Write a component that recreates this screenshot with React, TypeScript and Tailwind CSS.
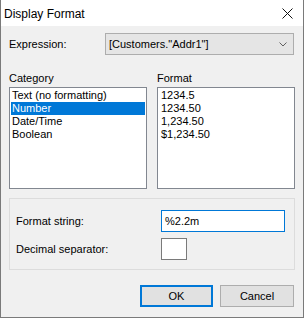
import React from "react";

const font = { fontFamily: '"Liberation Sans", Arial, sans-serif' };

export default function App() {
  const cats = ["Text (no formatting)", "Number", "Date/Time", "Boolean"];
  const fmts = ["1234.5", "1234.50", "1,234.50", "$1,234.50"];
  return (
    <div
      style={font}
      className="w-[304px] h-[318px] box-border border-x border-b border-[#7a7a7a] bg-[#f0f0f0] flex flex-col text-[11px] leading-[13px] text-black overflow-hidden"
    >
      <div className="h-[26px] bg-white flex items-center justify-between pl-[3px] pr-[10px] shrink-0">
        <span className="text-[12px] leading-[14px] mt-[1px]">Display Format</span>
        <svg width="11" height="11" viewBox="0 0 11 11" className="mt-[1px]">
          <path d="M0.5 0.5 L10.5 10.5 M10.5 0.5 L0.5 10.5" stroke="#111" strokeWidth="1" fill="none" />
        </svg>
      </div>
      <div className="flex flex-col pl-[8px] pr-[8px]">
        <div className="flex items-center mt-[7px] h-[22px]">
          <span className="w-[96px]">Expression:</span>
          <div className="w-[189px] h-[22px] box-border border border-[#adadad] bg-[#e5e5e5] flex items-center justify-between pl-[3px] pr-[6px]">
            <span>[Customers."Addr1"]</span>
            <svg width="8" height="5" viewBox="0 0 8 5">
              <path d="M0.5 0.5 L4 4 L7.5 0.5" stroke="#606060" strokeWidth="1" fill="none" />
            </svg>
          </div>
        </div>
        <div className="flex gap-[10px] mt-[17px]">
          <div className="flex flex-col">
            <span className="h-[15px]">Category</span>
            <div className="w-[138px] h-[102px] box-border border border-[#828790] bg-white p-[1px]">
              {cats.map((c, i) => (
                <div
                  key={c}
                  className={
                    i === 1
                      ? "h-[13px] pl-[1px] bg-[#0078d7] text-white"
                      : "h-[13px] pl-[1px]"
                  }
                >
                  {c}
                </div>
              ))}
            </div>
          </div>
          <div className="flex flex-col">
            <span className="h-[15px]">Format</span>
            <div className="w-[138px] h-[102px] box-border border border-[#828790] bg-white pt-[1px] pl-[3px]">
              {fmts.map((f) => (
                <div key={f} className="h-[13px]">
                  {f}
                </div>
              ))}
            </div>
          </div>
        </div>
        <div className="mt-[9px] w-[286px] h-[72px] box-border border border-[#dcdcdc] flex flex-col pl-[6px] pt-[11px] gap-[6px]">
          <div className="flex items-center h-[22px]">
            <span className="w-[145px]">Format string:</span>
            <div className="w-[124px] h-[22px] box-border border border-[#0078d7] bg-white flex items-center pl-[3px]">
              %2.2m
            </div>
          </div>
          <div className="flex items-center h-[22px]">
            <span className="w-[145px]">Decimal separator:</span>
            <div className="w-[26px] h-[22px] box-border border border-[#7a7a7a] bg-white" />
          </div>
        </div>
        <div className="flex justify-end gap-[7px] mt-[15px] pr-[1px]">
          <div className="w-[73px] h-[22px] box-border border-2 border-[#0078d7] bg-[#e1e1e1] flex items-center justify-center">
            OK
          </div>
          <div className="w-[74px] h-[22px] box-border border border-[#adadad] bg-[#e1e1e1] flex items-center justify-center">
            Cancel
          </div>
        </div>
      </div>
    </div>
  );
}
